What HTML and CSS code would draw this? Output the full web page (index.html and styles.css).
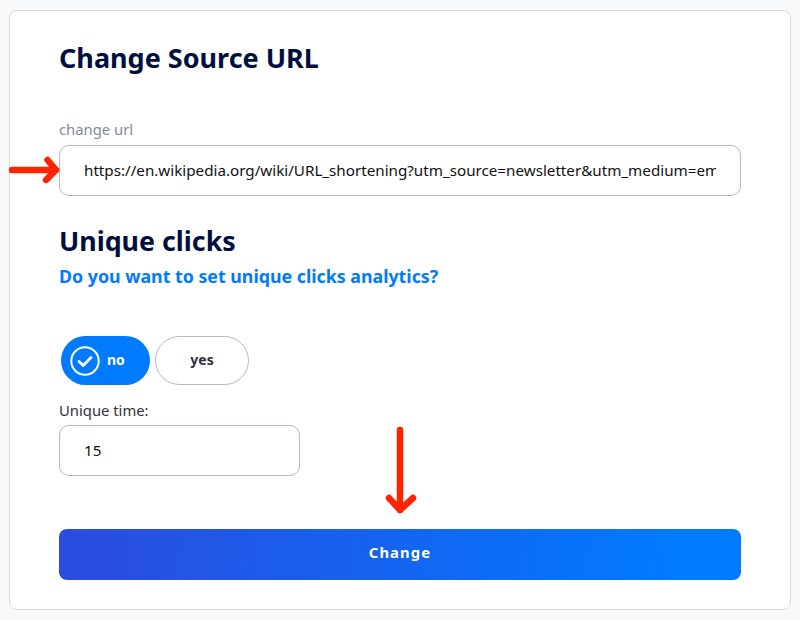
FILE: index.html
```html
<!DOCTYPE html>
<html>
	<head>
		<meta charset="UTF-8">
		<title>Change Source URL</title>
		<link rel="stylesheet" href="styles.css">
	</head>
	<body>
		<div class="card">
			<h1 class="title">Change Source URL</h1>
			<label class="label-url">change url</label>
			<input class="field" type="text" value="https://en.wikipedia.org/wiki/URL_shortening?utm_source=newsletter&amp;utm_medium=email&amp;utm_campaign=spring">
			<h2 class="subtitle">Unique clicks</h2>
			<p class="question">Do you want to set unique clicks analytics?</p>
			<div class="choices">
				<div class="choice active">
					<svg class="check" width="30" height="30" viewBox="0 0 30 30">
						<circle cx="15" cy="15" r="13.700" fill="none" stroke="#fff" stroke-width="2"/>
						<path d="M9 15.500l4.200 4 7.800-8" fill="none" stroke="#fff" stroke-width="2.800" stroke-linecap="round" stroke-linejoin="round"/>
					</svg>
					<span>no</span>
				</div>
				<div class="choice">yes</div>
			</div>
			<label class="label-time">Unique time:</label>
			<input class="field field-small" type="text" value="15">
			<button class="submit">Change</button>

			<svg class="arrow arrow-right" width="54" height="32" viewBox="0 0 54 32">
				<path d="M4 15H48M39.500 5L48 15L38 25" fill="none" stroke="#ff2400" stroke-width="6.500" stroke-linecap="round" stroke-linejoin="round"/>
			</svg>
			<svg class="arrow arrow-down" width="36" height="94" viewBox="0 0 36 94">
				<path d="M17 6V86M6 74L17 86L30 74" fill="none" stroke="#ff2400" stroke-width="6.500" stroke-linecap="round" stroke-linejoin="round"/>
			</svg>
		</div>
	</body>
</html>
```

FILE: styles.css
```css
* {
	box-sizing: border-box;
}
body {
	margin: 0;
	padding: 10px 9px;
	background: #f8f9fa;
	font-family: "Noto Sans", "Open Sans", sans-serif;
}
.card {
	position: relative;
	width: 782px;
	height: 600px;
	padding: 28px 49px 0;
	background: #fff;
	border: 1px solid #d9dadc;
	border-radius: 8px;
}
.title {
	margin: 0;
	height: 38px;
	color: #000f3d;
	font-size: 27px;
	line-height: 38px;
	font-weight: 700;
}
.label-url {
	display: block;
	margin-top: 43px;
	height: 25px;
	color: #828a9e;
	font-size: 14.800px;
	line-height: 18px;
}
.field {
	display: block;
	width: 100%;
	height: 51px;
	padding: 0 24px 2px;
	border: 1px solid #b3b8c9;
	border-radius: 10px;
	background: #fff;
	color: #111;
	font-family: inherit;
	font-size: 15.200px;
	outline: none;
}
.field-small {
	width: 241px;
}
.subtitle {
	margin: 25px 0 0;
	height: 40px;
	color: #000f3d;
	font-size: 26.800px;
	line-height: 40px;
	font-weight: 700;
}
.question {
	margin: 0;
	height: 30px;
	color: #007aff;
	font-size: 17.800px;
	line-height: 30px;
	font-weight: 700;
}
.choices {
	display: flex;
	gap: 5px;
	margin: 45px 0 0 2px;
}
.choice {
	display: flex;
	align-items: center;
	justify-content: center;
	width: 94px;
	height: 49px;
	padding-bottom: 2px;
	border: 1px solid #b3b8c9;
	border-radius: 25px;
	color: #33313a;
	font-size: 14px;
	font-weight: 700;
}
.choice.active {
	justify-content: flex-start;
	gap: 7px;
	width: 89px;
	padding: 0 0 0 9px;
	border: 0;
	background: #007aff;
	color: #fff;
}
.choice.active span {
	margin-bottom: 2px;
}
.label-time {
	display: block;
	margin-top: 14px;
	height: 26px;
	color: #33313a;
	font-size: 14.800px;
	line-height: 22px;
}
.submit {
	display: block;
	width: 100%;
	height: 51px;
	margin-top: 53px;
	padding: 0 0 5px;
	border: 0;
	border-radius: 8px;
	background: linear-gradient(100deg, #2c4bdf, #007aff 90%);
	color: #fff;
	font-family: inherit;
	font-size: 14.800px;
	font-weight: 700;
	letter-spacing: 1.100px;
}
.arrow {
	position: absolute;
}
.arrow-right {
	left: -2px;
	top: 144px;
}
.arrow-down {
	left: 373px;
	top: 413px;
}
```
